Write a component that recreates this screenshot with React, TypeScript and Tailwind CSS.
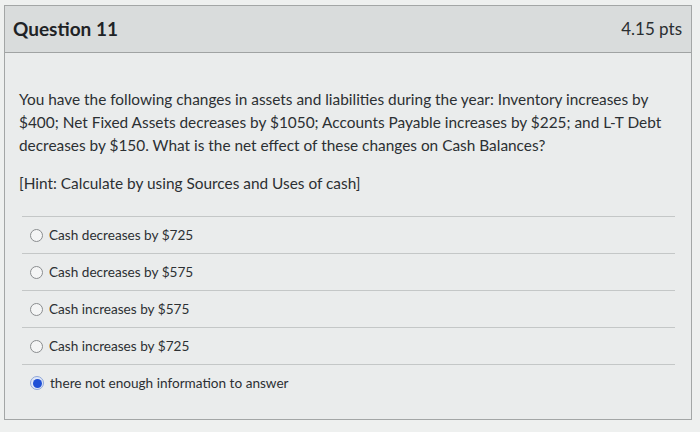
const options = [
  { label: "Cash decreases by $725", checked: false },
  { label: "Cash decreases by $575", checked: false },
  { label: "Cash increases by $575", checked: false },
  { label: "Cash increases by $725", checked: false },
  { label: "there not enough information to answer", checked: true },
];

function Radio({ checked }: { checked: boolean }) {
  if (checked) {
    return (
      <span className="flex h-[14px] w-[14px] items-center justify-center rounded-full border border-[#8fa6d8] bg-[#dfe7f7]">
        <span className="h-[9px] w-[9px] rounded-full bg-[#1f50d6]" />
      </span>
    );
  }
  return <span className="h-[13px] w-[13px] rounded-full border-[1.5px] border-[#8a8d8f] bg-[#f4f5f5]" />;
}

export default function App() {
  return (
    <div
      className="h-[432px] w-[700px] overflow-hidden bg-[#eef0ef] pl-[4px] pr-[8px] pt-[5px] text-[#2c3033]"
      style={{ fontFamily: "Lato, 'Open Sans', sans-serif" }}
    >
      <div className="h-[415px] border border-[#a3a6a6] bg-[#eaecec]">
        <div className="flex h-[47px] items-center justify-between border-b border-[#a0a3a3] bg-[#d9dcdc] pl-[8px] pr-[9px]">
          <span className="text-[19px] font-bold text-[#1f2326]">Question 11</span>
          <span className="text-[17px] text-[#2a2e31]">4.15 pts</span>
        </div>
        <div className="pl-[14px] pr-[20px] pt-[35px]">
          <p className="whitespace-nowrap text-[15.4px] leading-[23px]">
            You have the following changes in assets and liabilities during the year: Inventory increases by
            <br />
            $400; Net Fixed Assets decreases by $1050; Accounts Payable increases by $225; and L-T Debt
            <br />
            decreases by $150. What is the net effect of these changes on Cash Balances?
          </p>
          <p className="mt-[15px] text-[15.4px] leading-[23px]">[Hint: Calculate by using Sources and Uses of cash]</p>
        </div>
        <div className="ml-[17px] mr-[16px] mt-[21px]">
          {options.map((o) => (
            <div key={o.label} className="flex h-[37px] items-center gap-[6px] border-t border-[#c4c7c7] pl-[8px]">
              <Radio checked={o.checked} />
              <span className="text-[13.6px]">{o.label}</span>
            </div>
          ))}
        </div>
      </div>
    </div>
  );
}
